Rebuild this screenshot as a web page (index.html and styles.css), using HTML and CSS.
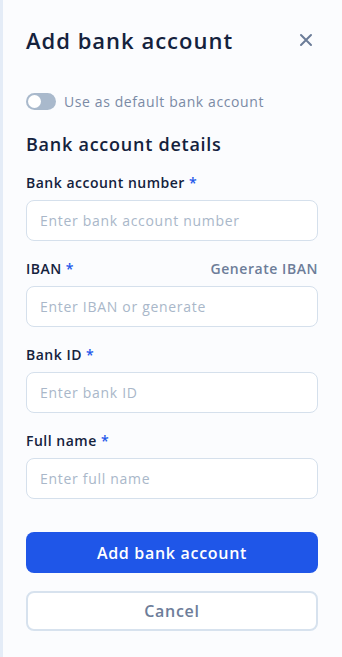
FILE: index.html
```html
<!DOCTYPE html>
<html>
<head>
<meta charset="utf-8">
<link rel="stylesheet" href="styles.css">
</head>
<body>
<div class="panel">
  <div class="header">
    <h1 class="title">Add bank account</h1>
    <button class="close" aria-label="Close">
      <svg width="14" height="14" viewBox="0 0 14 14"><path d="M2 2 L12 12 M12 2 L2 12" stroke="#6b7c98" stroke-width="2" stroke-linecap="round" fill="none"/></svg>
    </button>
  </div>
  <label class="toggle-row">
    <span class="toggle"><span class="knob"></span></span>
    <span class="toggle-text">Use as default bank account</span>
  </label>
  <h2 class="section">Bank account details</h2>
  <div class="field">
    <div class="label-row"><span class="label">Bank account number <span class="req">*</span></span></div>
    <div class="input">Enter bank account number</div>
  </div>
  <div class="field">
    <div class="label-row"><span class="label">IBAN <span class="req">*</span></span><span class="link">Generate IBAN</span></div>
    <div class="input">Enter IBAN or generate</div>
  </div>
  <div class="field">
    <div class="label-row"><span class="label">Bank ID <span class="req">*</span></span></div>
    <div class="input">Enter bank ID</div>
  </div>
  <div class="field">
    <div class="label-row"><span class="label">Full name <span class="req">*</span></span></div>
    <div class="input">Enter full name</div>
  </div>
  <div class="actions">
    <button class="btn primary">Add bank account</button>
    <button class="btn secondary">Cancel</button>
  </div>
</div>
</body>
</html>
```
FILE: styles.css
```css
* { box-sizing: border-box; }
html, body { margin: 0; padding: 0; }
body {
  background: #fbfcfe;
  font-family: "Open Sans", "Noto Sans", sans-serif;
  letter-spacing: 0.6px;
  width: 342px;
  height: 657px;
}
.panel {
  height: 657px;
  border-left: 3px solid #e4ecf7;
  padding: 26px 24px 0 23px;
  display: flex;
  flex-direction: column;
}
.header {
  display: flex;
  align-items: center;
  justify-content: space-between;
  height: 28px;
}
.title {
  margin: 0;
  font-size: 22px;
  line-height: 28px;
  font-weight: 600;
  letter-spacing: 1px;
  color: #14223d;
}
.close {
  border: 0;
  background: none;
  padding: 0;
  width: 14px;
  height: 14px;
  margin-right: 5px;
  display: flex;
}
.toggle-row {
  margin-top: 38px;
  display: flex;
  align-items: center;
  height: 18px;
  gap: 8px;
}
.toggle {
  width: 30px;
  height: 17px;
  border-radius: 9px;
  background: #a9b9cc;
  display: flex;
  align-items: center;
  padding-left: 2px;
}
.knob {
  width: 13px;
  height: 13px;
  border-radius: 50%;
  background: #fff;
}
.toggle-text {
  font-size: 14px;
  color: #7a8aa5;
}
.section {
  margin: 22px 0 0;
  font-size: 18px;
  line-height: 24px;
  font-weight: 600;
  letter-spacing: 0.75px;
  color: #14223d;
}
.field { display: flex; flex-direction: column; }
.section + .field { margin-top: 16px; }
.field + .field { margin-top: 17px; }
.label-row {
  display: flex;
  justify-content: space-between;
  align-items: center;
  height: 20px;
  margin-bottom: 8px;
}
.label {
  font-size: 14px;
  font-weight: 600;
  letter-spacing: 0.5px;
  color: #14223d;
}
.req { color: #2357ea; }
.link {
  font-size: 14px;
  font-weight: 600;
  letter-spacing: 0.55px;
  color: #6d7d99;
}
.input {
  height: 41px;
  border: 1px solid #d5e0ec;
  border-radius: 8px;
  background: #fff;
  padding: 0 13px;
  display: flex;
  align-items: center;
  font-size: 14px;
  letter-spacing: 0.7px;
  color: #a9b7c9;
}
.actions {
  margin-top: 33px;
  display: flex;
  flex-direction: column;
  gap: 18px;
}
.btn {
  height: 41px;
  border-radius: 8px;
  font-family: inherit;
  font-size: 16px;
  font-weight: 600;
  letter-spacing: 0.7px;
  padding: 0;
}
.primary {
  background: #1f56e8;
  color: #fff;
  border: 0;
}
.secondary {
  height: 40px;
  background: #fff;
  color: #6d7d99;
  border: 2px solid #d7e2ee;
}
```
